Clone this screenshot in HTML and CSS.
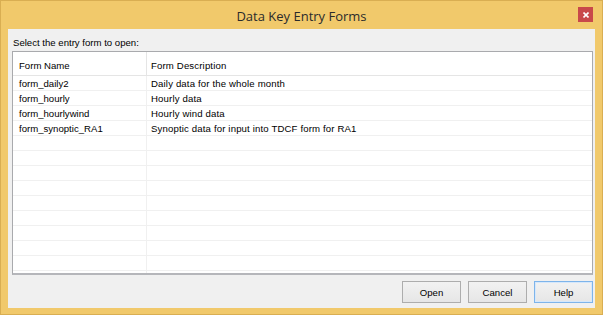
FILE: index.html
```html
<!DOCTYPE html>
<html>
<head>
<meta charset="utf-8">
<link rel="stylesheet" href="styles.css">
</head>
<body>
<div class="window">
  <div class="titlebar">
    <div class="title">Data Key Entry Forms</div>
    <div class="close"><svg width="6" height="6" viewBox="0 0 6 6"><path d="M0.5 0.5L5.5 5.5M5.5 0.5L0.5 5.5" stroke="#fff" stroke-width="1.6"/></svg></div>
  </div>
  <div class="client">
    <div class="label">Select the entry form to open:</div>
    <div class="list">
      <div class="row head"><div class="c1">Form Name</div><div class="c2">Form Description</div></div>
      <div class="row"><div class="c1">form_daily2</div><div class="c2">Daily data for the whole month</div></div>
      <div class="row"><div class="c1">form_hourly</div><div class="c2">Hourly data</div></div>
      <div class="row"><div class="c1">form_hourlywind</div><div class="c2">Hourly wind data</div></div>
      <div class="row"><div class="c1">form_synoptic_RA1</div><div class="c2">Synoptic data for input into TDCF form for RA1</div></div>
      <div class="row"><div class="c1"></div><div class="c2"></div></div>
      <div class="row"><div class="c1"></div><div class="c2"></div></div>
      <div class="row"><div class="c1"></div><div class="c2"></div></div>
      <div class="row"><div class="c1"></div><div class="c2"></div></div>
      <div class="row"><div class="c1"></div><div class="c2"></div></div>
      <div class="row"><div class="c1"></div><div class="c2"></div></div>
      <div class="row"><div class="c1"></div><div class="c2"></div></div>
      <div class="row"><div class="c1"></div><div class="c2"></div></div>
      <div class="row"><div class="c1"></div><div class="c2"></div></div>
      <div class="row filler"><div class="c1"></div><div class="c2"></div></div>
    </div>
    <div class="buttons">
      <div class="btn">Open</div>
      <div class="btn">Cancel</div>
      <div class="btn default">Help</div>
    </div>
  </div>
</div>
</body>
</html>
```
FILE: styles.css
```css
html, body {
  margin: 0;
  padding: 0;
  background: #ffffff;
}
.window {
  width: 603px;
  height: 315px;
  box-sizing: border-box;
  background: #f1c96b;
  border: 1px solid #d9ae52;
  display: flex;
  flex-direction: column;
}
.titlebar {
  height: 28px;
  flex: none;
  display: flex;
  align-items: center;
  justify-content: center;
  position: relative;
}
.title {
  font-family: "Open Sans", "Noto Sans", sans-serif;
  font-size: 13px;
  color: #2b2b2b;
  margin-top: 1px;
}
.close {
  position: absolute;
  right: 9px;
  top: 6px;
  width: 15px;
  height: 15px;
  background: #c8494a;
  display: flex;
  align-items: center;
  justify-content: center;
}
.client {
  flex: 1;
  margin: 0 7px 6px 7px;
  background: #f0f0f0;
  padding: 0 2px 5px 4px;
  display: flex;
  flex-direction: column;
  font-family: "Liberation Sans", Arial, sans-serif;
  font-size: 9.6px;
  color: #000;
}
.label {
  height: 22px;
  flex: none;
  box-sizing: border-box;
  padding-top: 8px;
  padding-left: 1px;
}
.list {
  height: 224px;
  flex: none;
  box-sizing: border-box;
  background: #fff;
  border: 1px solid #a9aaad;
  border-bottom: 2px solid #b5b6ba;
  display: flex;
  flex-direction: column;
}
.row {
  display: flex;
  height: 15px;
  flex: none;
  box-sizing: border-box;
  border-bottom: 1px solid #f0f0f0;
}
.row .c1 {
  width: 134px;
  flex: none;
  padding-left: 6px;
  box-sizing: border-box;
  border-right: 1px solid #f0f0f0;
  line-height: 16px;
  white-space: nowrap;
}
.row .c2 {
  flex: 1;
  padding-left: 4px;
  line-height: 16px;
  white-space: nowrap;
  letter-spacing: 0.15px;
}
.row.head {
  height: 24px;
  border-bottom: 1px solid #e5e5e5;
}
.row.head .c1 {
  border-right: 1px solid #e5e5e5;
  line-height: 27px;
}
.row.head .c2 {
  line-height: 27px;
}
.row.filler {
  flex: 1;
  height: auto;
  border-bottom: none;
}
.buttons {
  margin-top: 6px;
  display: flex;
  justify-content: flex-end;
  gap: 7px;
}
.btn {
  width: 59px;
  height: 22px;
  box-sizing: border-box;
  border: 1px solid #adadad;
  background: linear-gradient(#f2f2f2, #e6e6e6);
  display: flex;
  align-items: center;
  justify-content: center;
}
.btn.default {
  border-color: #7eb4ea;
  box-shadow: inset 0 0 0 1px #d6e8fb;
}
```
